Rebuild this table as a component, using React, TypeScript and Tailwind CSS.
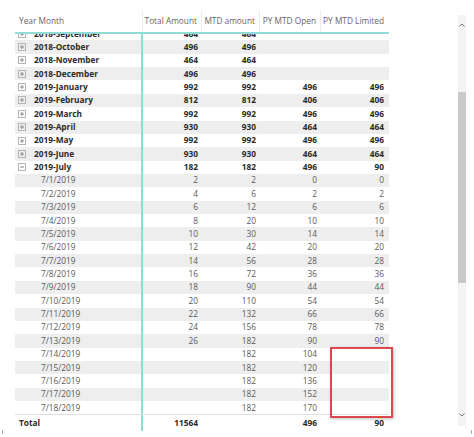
import React from "react";

type Row = {
  label: string;
  kind: "month" | "open" | "day";
  total: string;
  mtd: string;
  pyOpen: string;
  pyLimited: string;
};

const rows: Row[] = [
  { label: "2018-September", kind: "month", total: "464", mtd: "464", pyOpen: "", pyLimited: "" },
  { label: "2018-October", kind: "month", total: "496", mtd: "496", pyOpen: "", pyLimited: "" },
  { label: "2018-November", kind: "month", total: "464", mtd: "464", pyOpen: "", pyLimited: "" },
  { label: "2018-December", kind: "month", total: "496", mtd: "496", pyOpen: "", pyLimited: "" },
  { label: "2019-January", kind: "month", total: "992", mtd: "992", pyOpen: "496", pyLimited: "496" },
  { label: "2019-February", kind: "month", total: "812", mtd: "812", pyOpen: "406", pyLimited: "406" },
  { label: "2019-March", kind: "month", total: "992", mtd: "992", pyOpen: "496", pyLimited: "496" },
  { label: "2019-April", kind: "month", total: "930", mtd: "930", pyOpen: "464", pyLimited: "464" },
  { label: "2019-May", kind: "month", total: "992", mtd: "992", pyOpen: "496", pyLimited: "496" },
  { label: "2019-June", kind: "month", total: "930", mtd: "930", pyOpen: "464", pyLimited: "464" },
  { label: "2019-July", kind: "open", total: "182", mtd: "182", pyOpen: "496", pyLimited: "90" },
];

const days: [string, string, string, string][] = [
  ["2", "2", "0", "0"],
  ["4", "6", "2", "2"],
  ["6", "12", "6", "6"],
  ["8", "20", "10", "10"],
  ["10", "30", "14", "14"],
  ["12", "42", "20", "20"],
  ["14", "56", "28", "28"],
  ["16", "72", "36", "36"],
  ["18", "90", "44", "44"],
  ["20", "110", "54", "54"],
  ["22", "132", "66", "66"],
  ["24", "156", "78", "78"],
  ["26", "182", "90", "90"],
  ["", "182", "104", ""],
  ["", "182", "120", ""],
  ["", "182", "136", ""],
  ["", "182", "152", ""],
  ["", "182", "170", ""],
];

days.forEach((d, i) =>
  rows.push({ label: `7/${i + 1}/2019`, kind: "day", total: d[0], mtd: d[1], pyOpen: d[2], pyLimited: d[3] })
);

function ExpandBox({ open }: { open: boolean }) {
  return (
    <svg width="8" height="8" viewBox="0 0 8 8" className="shrink-0">
      <rect x="0.5" y="0.5" width="7" height="7" fill="none" stroke="#b5b5b5" />
      <path d={open ? "M2 4h4" : "M2 4h4M4 2v4"} stroke="#8a8a8a" strokeWidth="1" />
    </svg>
  );
}

function Chevron({ up }: { up: boolean }) {
  return (
    <svg width="6" height="4" viewBox="0 0 6 4">
      <path d={up ? "M0.5 3.5L3 1l2.5 2.5" : "M0.5 0.5L3 3l2.5-2.5"} fill="none" stroke="#777" strokeWidth="1" />
    </svg>
  );
}

const num = "flex items-center justify-end pr-[4px]";

export default function App() {
  return (
    <div
      className="relative w-[474px] h-[437px] bg-white overflow-hidden"
      style={{ fontFamily: '"Open Sans", "Noto Sans", sans-serif' }}
    >
      <div className="flex pt-[10px] pl-[15px]">
        {/* matrix */}
        <div className="w-[374px] text-[8.3px] leading-none">
          <div className="flex h-[24px] text-[#666] border-b-2 border-[#8fdcd5]">
            <div className="w-[128px] flex items-center pl-[4px] border-r border-[#ececec]">Year Month</div>
            <div className={`w-[59px] border-r border-[#ececec] ${num}`}>Total Amount</div>
            <div className={`w-[58px] border-r border-[#ececec] ${num}`}>MTD amount</div>
            <div className={`w-[61px] border-r border-[#ececec] ${num}`}>PY MTD Open</div>
            <div className={`w-[68px] ${num} pr-[5px]`}>PY MTD Limited</div>
          </div>

          <div className="h-[380px] overflow-hidden">
            <div className="-mt-[7px]">
              {rows.map((r, i) => {
                const bold = r.kind !== "day";
                return (
                  <div
                    key={r.label}
                    className={`flex h-[13.37px] ${i % 2 === 1 ? "bg-[#eeeeee]" : "bg-white"} ${
                      bold ? "font-bold text-[#2b2b2b]" : "text-[#5a5a5a]"
                    }`}
                  >
                    <div className="w-[128px] flex items-center border-r-2 border-[#8fdcd5]">
                      {bold ? (
                        <div className="flex items-center gap-[8px] pl-[3px]">
                          <ExpandBox open={r.kind === "open"} />
                          <span>{r.label}</span>
                        </div>
                      ) : (
                        <span className="pl-[26px]">{r.label}</span>
                      )}
                    </div>
                    <div className={`w-[59px] ${num}`}>{r.total}</div>
                    <div className={`w-[58px] ${num}`}>{r.mtd}</div>
                    <div className={`w-[61px] ${num}`}>{r.pyOpen}</div>
                    <div className={`w-[68px] ${num} pr-[5px]`}>{r.pyLimited}</div>
                  </div>
                );
              })}
            </div>
          </div>

          <div className="flex h-[17px] border-t border-[#dedede] font-bold text-[#2b2b2b]">
            <div className="w-[128px] flex items-center pl-[4px] border-r-2 border-[#8fdcd5]">Total</div>
            <div className={`w-[59px] ${num}`}>11564</div>
            <div className={`w-[58px] ${num}`}></div>
            <div className={`w-[61px] ${num}`}>496</div>
            <div className={`w-[68px] ${num} pr-[5px]`}>90</div>
          </div>
        </div>

        {/* scrollbar */}
        <div className="ml-[69px] mt-[5px] w-[8px] h-[411px] bg-[#f3f3f3] flex flex-col items-center">
          <div className="h-[20px] flex items-center">
            <Chevron up />
          </div>
          <div className="h-[57px]" />
          <div className="w-full h-[191px] bg-[#c9c9c9]" />
          <div className="flex-1" />
          <div className="h-[22px] flex items-center">
            <Chevron up={false} />
          </div>
        </div>
      </div>

      {/* highlight box */}
      <div className="absolute left-[330px] top-[347px] w-[63px] h-[71px] border-2 border-[#dc4850] shadow-[1px_1px_3px_rgba(0,0,0,0.25)]" />

      <span className="absolute left-[2px] top-[430px] w-[1px] h-[4px] bg-[#aaa]" />
      <span className="absolute left-[471px] top-[430px] w-[1px] h-[4px] bg-[#aaa]" />
    </div>
  );
}
